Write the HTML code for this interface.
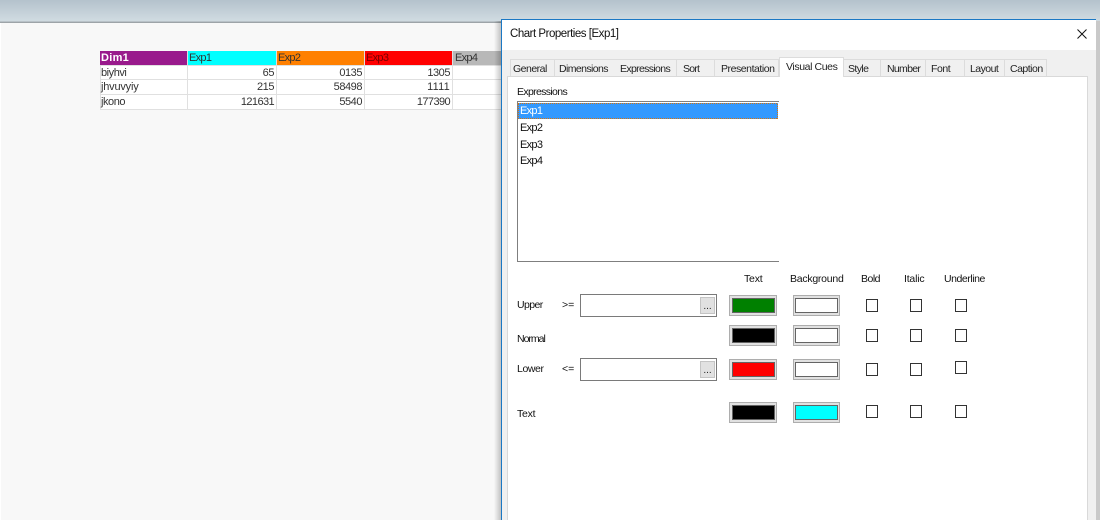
<!DOCTYPE html>
<html><head><meta charset="utf-8">
<style>
html,body{margin:0;padding:0;background:#fff}
#p{position:relative;width:1100px;height:527px;overflow:hidden;background:#fff;font-family:"Liberation Sans",sans-serif;font-size:11px;color:#111}
#p div{position:absolute;box-sizing:border-box;white-space:nowrap}
.t{line-height:14px;height:14px}
.c{padding:0 2px;line-height:14px;color:#333;letter-spacing:-.45px}
.c.l{line-height:15px}
.r{text-align:right}
.tab{top:59px;height:17px;background:#f0f0f0;border:1px solid #dcdcdc;border-bottom:0;text-align:left;line-height:18px;font-size:10.5px;color:#222}
.sw{width:48px;height:21px;background:#e1e1e1;border:1px solid #adadad}
.sw div{left:2px;top:2px;width:43px;height:15px;border:1px solid #646464}
.bg{width:47px}
.bg div{left:1px;width:43px}
.cb{width:12px;height:13px;background:#fff;border:1px solid #333}
.inp{left:580px;width:137px;height:23px;background:#fff;border:1px solid #7a7a7a}
.btn{left:119px;top:2px;width:15px;height:17px;background:#e1e1e1;border:1px solid #c4c4c4;text-align:center;line-height:17px;font-size:10px;color:#222}
.lb{font-size:10.5px}
.e{letter-spacing:-.7px}
.sel{background-color:#39f;background-image:repeating-linear-gradient(90deg,#d9730d 0 1px,transparent 1px 2px),repeating-linear-gradient(90deg,#d9730d 0 1px,transparent 1px 2px),repeating-linear-gradient(0deg,#d9730d 0 1px,transparent 1px 2px),repeating-linear-gradient(0deg,#d9730d 0 1px,transparent 1px 2px);background-size:100% 1px,100% 1px,1px 100%,1px 100%;background-position:0 0,0 100%,0 0,100% 0;background-repeat:no-repeat}
</style></head><body><div id="p">
<div style="left:0;top:0;width:1100px;height:520px;background:#f8f8f8"></div>
<div style="left:0;top:23px;width:1px;height:497px;background:#fff"></div>
<div style="left:0;top:0;width:1100px;height:23px;background:linear-gradient(#b4c2cc,#d0dbe1 90%,#8f9498)"></div>

<div style="left:100px;top:51px;width:410px;height:59px;background:#e0e0e0"></div>
<div class="c" style="left:100px;top:51px;width:87px;height:14px;background:#991a8c;color:#fff;font-weight:bold;letter-spacing:.3px;padding-left:1px">Dim1</div>
<div class="c" style="left:188px;top:51px;width:88px;height:14px;background:#0ff;padding-left:1px;letter-spacing:-.7px">Exp1</div>
<div class="c" style="left:277px;top:51px;width:87px;height:14px;background:#ff8000;padding-left:1px;letter-spacing:-.7px">Exp2</div>
<div class="c" style="left:365px;top:51px;width:87px;height:14px;background:#f00;color:#700;padding-left:1px;letter-spacing:-.7px">Exp3</div>
<div class="c" style="left:453px;top:51px;width:57px;height:14px;background:#b8b8b8;padding-left:2px;letter-spacing:-.7px">Exp4</div>

<div class="c" style="left:101px;top:66px;width:86px;height:13px;background:#fff;padding-left:0">biyhvi</div>
<div class="c r" style="left:188px;top:66px;width:88px;height:13px;background:#fff">65</div>
<div class="c r" style="left:277px;top:66px;width:87px;height:13px;background:#fff">0135</div>
<div class="c r" style="left:365px;top:66px;width:87px;height:13px;background:#fff">1305</div>
<div class="c" style="left:453px;top:66px;width:57px;height:13px;background:#fff"></div>

<div class="c l" style="left:101px;top:80px;width:86px;height:14px;background:#fff;padding-left:0;letter-spacing:-.2px">jhvuvyiy</div>
<div class="c r l" style="left:188px;top:80px;width:88px;height:14px;background:#fff">215</div>
<div class="c r l" style="left:277px;top:80px;width:87px;height:14px;background:#fff">58498</div>
<div class="c r l" style="left:365px;top:80px;width:87px;height:14px;background:#fff;letter-spacing:.2px">1111</div>
<div class="c" style="left:453px;top:80px;width:57px;height:14px;background:#fff"></div>

<div class="c l" style="left:101px;top:95px;width:86px;height:14px;background:#fff;padding-left:0">jkono</div>
<div class="c r l" style="left:188px;top:95px;width:88px;height:14px;background:#fff;letter-spacing:-.6px">121631</div>
<div class="c r l" style="left:277px;top:95px;width:87px;height:14px;background:#fff">5540</div>
<div class="c r l" style="left:365px;top:95px;width:87px;height:14px;background:#fff;letter-spacing:-.6px">177390</div>
<div class="c" style="left:453px;top:95px;width:57px;height:14px;background:#fff"></div>

<div style="left:494px;top:21px;width:7px;height:499px;background:linear-gradient(90deg,rgba(0,0,0,0),rgba(0,0,0,.22))"></div>
<div style="left:1096px;top:21px;width:4px;height:499px;background:#c9c9c9"></div>
<div style="left:501px;top:19px;width:595px;height:1px;background:#1b78c4"></div>
<div style="left:501px;top:19px;width:1px;height:501px;background:#1b78c4"></div>
<div style="left:502px;top:20px;width:594px;height:30px;background:#fff"></div>
<div style="left:502px;top:50px;width:594px;height:470px;background:#f0f0f0"></div>
<div class="t" style="left:510px;top:27px;font-size:11.5px;letter-spacing:-.48px;color:#111">Chart Properties [Exp1]</div>
<svg style="position:absolute;left:1076px;top:28px" width="12" height="12" viewBox="0 0 12 12"><path d="M1.5 1.5L10.5 10.5M10.5 1.5L1.5 10.5" stroke="#111" stroke-width="1" fill="none"/></svg>

<div style="left:507px;top:76px;width:581px;height:444px;background:#fff;border:1px solid #d9d9d9;border-bottom:0"></div>
<div class="tab" style="left:510px;width:45px;padding-left:2px;letter-spacing:-.5px">General</div>
<div class="tab" style="left:554px;width:62px;padding-left:4px;letter-spacing:-.6px;border-right:0">Dimensions</div>
<div class="tab" style="left:615px;width:62px;padding-left:4px;letter-spacing:-.65px;border-left:0;padding-left:5px">Expressions</div>
<div class="tab" style="left:676px;width:39px;padding-left:6px;letter-spacing:-.8px">Sort</div>
<div class="tab" style="left:714px;width:65px;padding-left:6px;letter-spacing:-.45px">Presentation</div>
<div class="tab" style="left:779px;top:57px;width:65px;height:20px;background:#fff;border-bottom:0;z-index:2;line-height:19px;padding-left:6px;letter-spacing:-.4px">Visual Cues</div>
<div class="tab" style="left:843px;width:38px;border-left:0;padding-left:5px;letter-spacing:-.6px">Style</div>
<div class="tab" style="left:880px;width:46px;padding-left:6px;letter-spacing:-.7px">Number</div>
<div class="tab" style="left:925px;width:40px;padding-left:5px;letter-spacing:-.45px">Font</div>
<div class="tab" style="left:964px;width:41px;padding-left:5px;letter-spacing:-.55px">Layout</div>
<div class="tab" style="left:1004px;width:43px;padding-left:5px;letter-spacing:-.5px">Caption</div>

<div class="t lb" style="left:517px;top:85px;letter-spacing:-.65px">Expressions</div>
<div style="left:517px;top:101px;width:262px;height:161px;background:#fff;border:1px solid #7f7f7f;border-right:0"></div>
<div class="t e sel" style="left:518px;top:103px;width:260px;height:16px;color:#fff;line-height:16px;padding-left:2px">Exp1</div>
<div class="t e" style="left:520px;top:121px">Exp2</div>
<div class="t e" style="left:520px;top:138px">Exp3</div>
<div class="t e" style="left:520px;top:154px">Exp4</div>

<div class="t lb" style="left:744px;top:272px;letter-spacing:-.2px">Text</div>
<div class="t lb" style="left:790px;top:272px;letter-spacing:-.25px">Background</div>
<div class="t lb" style="left:861px;top:272px;letter-spacing:-.5px">Bold</div>
<div class="t lb" style="left:904px;top:272px;letter-spacing:-.2px">Italic</div>
<div class="t lb" style="left:944px;top:272px;letter-spacing:-.45px">Underline</div>

<div class="t lb" style="left:517px;top:298px;letter-spacing:-.6px">Upper</div>
<div class="t lb" style="left:562px;top:298px">&gt;=</div>
<div class="inp" style="top:294px"><div class="btn">...</div></div>
<div class="sw" style="left:729px;top:295px"><div style="background:#008000"></div></div>
<div class="sw bg" style="left:793px;top:295px"><div style="background:#fff"></div></div>
<div class="cb" style="left:866px;top:299px"></div>
<div class="cb" style="left:910px;top:299px"></div>
<div class="cb" style="left:955px;top:299px"></div>

<div class="t lb" style="left:517px;top:332px;letter-spacing:-1px">Normal</div>
<div class="sw" style="left:729px;top:325px"><div style="background:#000"></div></div>
<div class="sw bg" style="left:793px;top:325px"><div style="background:#fff"></div></div>
<div class="cb" style="left:866px;top:329px"></div>
<div class="cb" style="left:910px;top:329px"></div>
<div class="cb" style="left:955px;top:329px"></div>

<div class="t lb" style="left:517px;top:362px;letter-spacing:-.4px">Lower</div>
<div class="t lb" style="left:562px;top:362px">&lt;=</div>
<div class="inp" style="top:358px"><div class="btn">...</div></div>
<div class="sw" style="left:729px;top:359px"><div style="background:#f00"></div></div>
<div class="sw bg" style="left:793px;top:359px"><div style="background:#fff"></div></div>
<div class="cb" style="left:866px;top:363px"></div>
<div class="cb" style="left:910px;top:363px"></div>
<div class="cb" style="left:955px;top:361px"></div>

<div class="t lb" style="left:517px;top:407px;letter-spacing:-.25px">Text</div>
<div class="sw" style="left:729px;top:402px"><div style="background:#000"></div></div>
<div class="sw bg" style="left:793px;top:402px"><div style="background:#0ff"></div></div>
<div class="cb" style="left:866px;top:405px"></div>
<div class="cb" style="left:910px;top:405px"></div>
<div class="cb" style="left:955px;top:405px"></div>
</div></body></html>
